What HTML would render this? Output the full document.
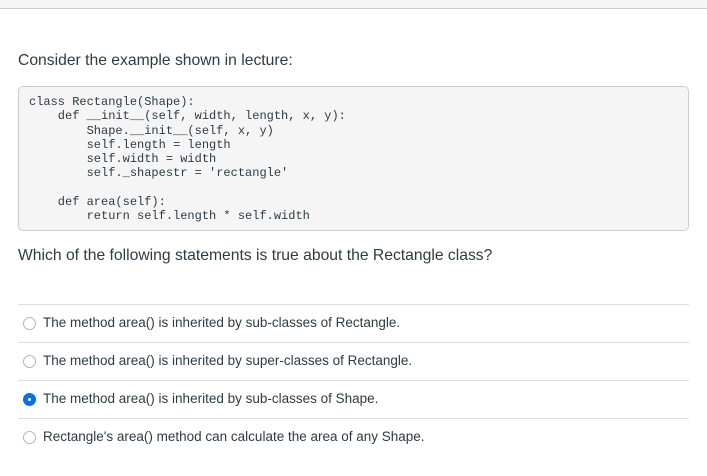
<!DOCTYPE html>
<html><head><meta charset="utf-8"><style>
html,body{margin:0;padding:0;background:#fff;width:707px;height:476px;overflow:hidden;font-family:"Liberation Sans",sans-serif;color:#2d3b45}
.top{position:absolute;left:0;top:0;width:707px;height:8px;background:#f5f5f5;border-bottom:1px solid #c7cdd1}
.t{position:absolute;left:18px;font-size:15.7px;white-space:nowrap}
.code{position:absolute;left:18px;top:86px;background:#f5f5f5;border:1px solid #c7cdd1;border-radius:5px;box-sizing:border-box;width:671px;height:145px}
pre{margin:0;position:absolute;left:10px;top:8px;font-family:"Liberation Mono",monospace;font-size:12px;line-height:14.3px;color:#2d3b45}
.hr{position:absolute;left:18px;width:671px;height:1px;background:#dcdfe2}
.opt{position:absolute;left:43px;font-size:13.5px;white-space:nowrap}
.r{position:absolute;left:23px;width:11px;height:11px;border:1px solid #b0b6ba;border-radius:50%;background:#fff}
.r.on{background:#0770e3;border-color:#0770e3}
.r.on:after{content:"";position:absolute;left:4px;top:4px;width:3px;height:3px;border-radius:50%;background:#fff}
</style></head><body>
<div class="top"></div>
<div class="t" style="top:52px">Consider the example shown in lecture:</div>
<div class="code"><pre>class Rectangle(Shape):
    def __init__(self, width, length, x, y):
        Shape.__init__(self, x, y)
        self.length = length
        self.width = width
        self._shapestr = 'rectangle'

    def area(self):
        return self.length * self.width</pre></div>
<div class="t" style="top:247px">Which of the following statements is true about the Rectangle class?</div>
<div class="hr" style="top:304px"></div>
<div class="r" style="top:317px"></div><div class="opt" style="top:315px">The method area() is inherited by sub-classes of Rectangle.</div>
<div class="hr" style="top:342px"></div>
<div class="r" style="top:355px"></div><div class="opt" style="top:353px">The method area() is inherited by super-classes of Rectangle.</div>
<div class="hr" style="top:380px"></div>
<div class="r on" style="top:393px"></div><div class="opt" style="top:391px">The method area() is inherited by sub-classes of Shape.</div>
<div class="hr" style="top:418px"></div>
<div class="r" style="top:431px"></div><div class="opt" style="top:429px">Rectangle's area() method can calculate the area of any Shape.</div>
</body></html>
